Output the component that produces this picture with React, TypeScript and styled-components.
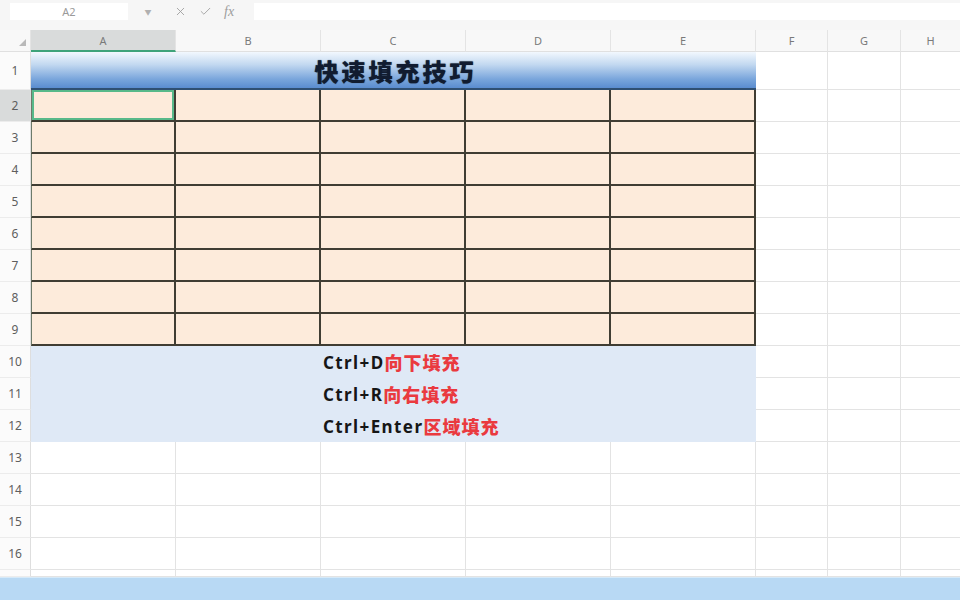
import React from 'react'
import styled, { createGlobalStyle } from 'styled-components'
import { X, Check } from 'lucide-react'

const GlobalStyle = createGlobalStyle`
	html, body {
		margin: 0;
		padding: 0;
		background: #ffffff;
		font-family: 'Noto Sans', 'Noto Sans CJK SC', sans-serif;
	}
`

const COLS = ['A', 'B', 'C', 'D', 'E', 'F', 'G', 'H']
const COL_WIDTHS = [145, 145, 145, 145, 145, 72, 73, 60]
const ROW_COUNT = 17

const Page = styled.div`
	width: 960px;
	height: 600px;
	overflow: hidden;
	display: flex;
	flex-direction: column;
	background: #ffffff;
`

const FormulaBar = styled.div`
	height: 30px;
	flex: 0 0 30px;
	display: flex;
	align-items: flex-start;
	padding-top: 3px;
	box-sizing: border-box;
	background: #f6f6f6;
`

const NameBox = styled.div`
	width: 118px;
	height: 17px;
	margin-left: 10px;
	background: #ffffff;
	display: flex;
	align-items: center;
	justify-content: center;
	font-size: 11px;
	color: #9a9a9a;
`

const DropArrow = styled.div`
	width: 40px;
	height: 17px;
	display: flex;
	align-items: center;
	justify-content: center;
	font-size: 7px;
	color: #b0b0b0;
`

const BarIcons = styled.div`
	display: flex;
	align-items: center;
	gap: 12px;
	height: 17px;
	padding-left: 6px;
	width: 80px;
	color: #9d9d9d;
`

const Fx = styled.span`
	font-family: 'Liberation Serif', serif;
	font-style: italic;
	font-size: 14px;
	color: #9d9d9d;
`

const FormulaInput = styled.div`
	flex: 1;
	height: 17px;
	background: #ffffff;
`

const Sheet = styled.div`
	flex: 1;
	display: grid;
	grid-template-columns: 31px ${COL_WIDTHS.map((w) => `${w}px`).join(' ')};
	grid-template-rows: 22px 38px repeat(15, 32px) 1fr;
	overflow: hidden;
`

const ColHead = styled.div<{ $selected?: boolean }>`
	display: flex;
	align-items: center;
	justify-content: center;
	font-size: 11px;
	color: #7a7a7a;
	background: ${(p) => (p.$selected ? '#d9dbdb' : '#f8f8f8')};
	border-right: 1px solid #e4e4e4;
	border-bottom: ${(p) => (p.$selected ? '2px solid #3fa37a' : '1px solid #e0e0e0')};
	box-sizing: border-box;
`

const Corner = styled.div`
	position: relative;
	background: #f8f8f8;
	border-bottom: 1px solid #e0e0e0;
	border-right: 1px solid #e4e4e4;

	&::after {
		content: '';
		position: absolute;
		right: 4px;
		bottom: 5px;
		border-left: 7px solid transparent;
		border-bottom: 7px solid #b9b9b9;
	}
`

const RowHead = styled.div<{ $selected?: boolean }>`
	display: flex;
	align-items: center;
	justify-content: center;
	font-size: 12px;
	color: #5e5e5e;
	background: ${(p) => (p.$selected ? '#d9dbdb' : '#fbfbfb')};
	border-right: 1px solid #dedede;
	border-bottom: 1px solid #ececec;
	box-sizing: border-box;
`

const Cell = styled.div`
	border-right: 1px solid #e3e3e3;
	border-bottom: 1px solid #e3e3e3;
	box-sizing: border-box;
	background: #ffffff;
`

const PeachCell = styled.div<{ $first?: boolean; $active?: boolean }>`
	background: #fdebdb;
	border-right: 2px solid #403d33;
	border-bottom: 2px solid #403d33;
	border-left: ${(p) => (p.$first ? '1px solid #6d7a6a' : 'none')};
	box-shadow: ${(p) => (p.$active ? 'inset 0 0 0 2px #58b98a' : 'none')};
	box-sizing: border-box;
`

const TitleCell = styled.div`
	grid-column: 2 / 7;
	grid-row: 2;
	display: flex;
	align-items: center;
	justify-content: center;
	background: linear-gradient(to bottom, #f2f8fe 0%, #c2d8f0 35%, #7aa6dc 75%, #5a8ccf 100%);
	border-bottom: 2px solid #2f4f72;
	box-sizing: border-box;
	font-family: 'Noto Sans CJK SC', sans-serif;
	font-weight: 900;
	font-size: 24px;
	letter-spacing: 3px;
	color: #111c30;
	padding-left: 4px;
	text-shadow: 0 0 1px #2a3a55;
`

const NoteCell = styled.div`
	grid-column: 2 / 7;
	grid-row: 11 / 14;
	background: #dfe9f6;
	display: flex;
	flex-direction: column;
	padding-left: 292px;
	box-sizing: border-box;
`

const NoteLine = styled.div`
	height: 32px;
	display: flex;
	align-items: center;
	font-weight: 700;
	font-size: 17px;
	white-space: nowrap;
`

const Keys = styled.span`
	color: #161616;
	letter-spacing: 1.4px;
	font-family: 'Noto Sans', 'Noto Sans CJK SC', sans-serif;
`

const Action = styled.span`
	color: #ea3a3f;
	font-family: 'Noto Sans CJK SC', sans-serif;
	font-size: 18px;
	font-weight: 900;
	letter-spacing: 1px;
`

const StatusBar = styled.div`
	height: 23px;
	flex: 0 0 23px;
	background: #b8d9f4;
	border-top: 1px solid #d6eaf9;
	box-sizing: border-box;
`

const notes = [
	{ keys: 'Ctrl+D', action: '向下填充' },
	{ keys: 'Ctrl+R', action: '向右填充' },
	{ keys: 'Ctrl+Enter', action: '区域填充' },
]

const App: React.FC = () => {
	const rows = Array.from({ length: ROW_COUNT }, (_, i) => i + 1)

	return (
		<Page>
			<GlobalStyle />
			<FormulaBar>
				<NameBox>A2</NameBox>
				<DropArrow>▼</DropArrow>
				<BarIcons>
					<X size={13} strokeWidth={1.6} />
					<Check size={13} strokeWidth={1.6} />
					<Fx>fx</Fx>
				</BarIcons>
				<FormulaInput />
			</FormulaBar>

			<Sheet>
				<Corner />
				{COLS.map((c) => (
					<ColHead key={c} $selected={c === 'A'}>{c}</ColHead>
				))}

				{rows.map((r) => (
					<React.Fragment key={r}>
						<RowHead $selected={r === 2} style={{ gridRow: r + 1, gridColumn: 1 }}>
							{r < ROW_COUNT ? r : null}
						</RowHead>
						{COLS.map((c, ci) => {
							const pos = { gridRow: r + 1, gridColumn: ci + 2 }
							if (ci < 5 && (r === 1 || (r >= 10 && r <= 12))) return null
							if (ci < 5 && r >= 2 && r <= 9) {
								return <PeachCell key={c} style={pos} $first={ci === 0} $active={ci === 0 && r === 2} />
							}
							return <Cell key={c} style={pos} />
						})}
					</React.Fragment>
				))}

				<TitleCell>快速填充技巧</TitleCell>
				<NoteCell>
					{notes.map((n) => (
						<NoteLine key={n.keys}>
							<Keys>{n.keys}</Keys>
							<Action>{n.action}</Action>
						</NoteLine>
					))}
				</NoteCell>
			</Sheet>

			<StatusBar />
		</Page>
	)
}

export default App
